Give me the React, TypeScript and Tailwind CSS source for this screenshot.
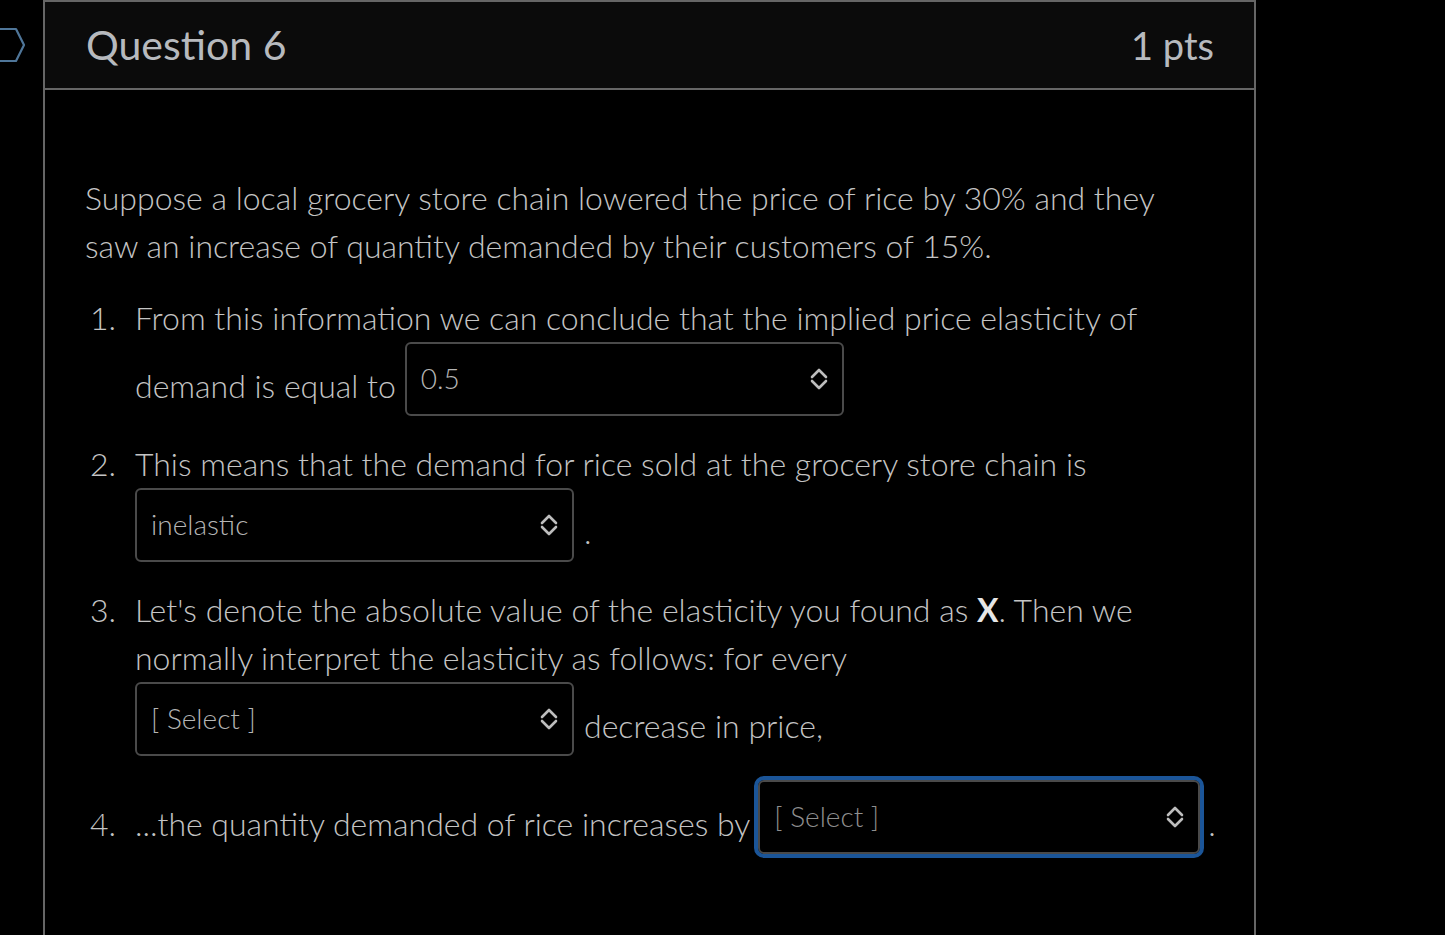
import React from "react";

function Chevrons() {
  return (
    <svg width="20" height="24" viewBox="0 0 20 24" fill="none" stroke="#bdbdbd" strokeWidth="2.6" strokeLinecap="round" strokeLinejoin="round">
      <path d="M3 10 L10 3 L17 10" />
      <path d="M3 14 L10 21 L17 14" />
    </svg>
  );
}

function Select({ value, width, focused, muted }: { value: string; width: string; focused?: boolean; muted?: boolean }) {
  return (
    <div
      className={
        "flex h-[74px] shrink-0 items-center justify-between rounded-[6px] border-2 border-[#4a4a4a] bg-black pl-[14px] pr-[13px] " +
        width +
        (focused ? " outline-[4px] outline-solid outline-[#1b5598]" : "")
      }
    >
      <span className={"text-[28px] font-light leading-none " + (muted ? "text-[#8f8f8f]" : "text-[#b5b5b5]")} style={{ marginTop: -2 }}>
        {value}
      </span>
      <Chevrons />
    </div>
  );
}

export default function App() {
  return (
    <div
      className="flex min-h-[935px] w-[1445px] overflow-hidden bg-black text-[#c4c4c4]"
      style={{ fontFamily: "Lato, 'Noto Sans', sans-serif" }}
    >
      <div className="w-[43px] shrink-0 pt-[27px]">
        <svg width="26" height="36" viewBox="0 0 26 36" fill="none" stroke="#4f7699" strokeWidth="2.2" strokeLinejoin="round">
          <path d="M-4 2 L16 2 L24 18 L16 34 L-4 34" />
        </svg>
      </div>
      <div className="w-[1213px] shrink-0 border-x-2 border-t-2 border-[#666666]">
        <div className="flex h-[88px] items-center justify-between border-b-2 border-[#666666] bg-[#0b0b0b] pl-[41px] pr-[40px]">
          <span className="text-[41px] font-normal text-[#b7babe]">Question 6</span>
          <span className="text-[38px] font-normal text-[#b7babe]">1 pts</span>
        </div>
        <div className="pl-[40px] pr-[40px] pt-[84px] text-[32px] font-light leading-[48px]">
          <p>
            Suppose a local grocery store chain lowered the price of rice by 30% and they
            <br />
            saw an increase of quantity demanded by their customers of 15%.
          </p>
          <ol className="mt-[24px]">
            <li className="flex">
              <span className="w-[50px] shrink-0 pl-[5px]">1.</span>
              <div>
                <div>From this information we can conclude that the implied price elasticity of</div>
                <div className="flex items-start gap-[9px]">
                  <span className="mt-[20px]">demand is equal to</span>
                  <Select value="0.5" width="w-[439px]" />
                </div>
              </div>
            </li>
            <li className="mt-[24px] flex">
              <span className="w-[50px] shrink-0 pl-[5px]">2.</span>
              <div>
                <div>This means that the demand for rice sold at the grocery store chain is</div>
                <div className="flex items-start gap-[10px]">
                  <Select value="inelastic" width="w-[439px]" />
                  <span className="mt-[20px]">.</span>
                </div>
              </div>
            </li>
            <li className="mt-[24px] flex">
              <span className="w-[50px] shrink-0 pl-[5px]">3.</span>
              <div>
                <div>
                  Let's denote the absolute value of the elasticity you found as <b className="font-bold text-[#e6e6e6]">X</b>. Then we
                </div>
                <div>normally interpret the elasticity as follows: for every</div>
                <div className="flex items-start gap-[10px]">
                  <Select value="[ Select ]" width="w-[439px]" />
                  <span className="mt-[20px]">decrease in price,</span>
                </div>
              </div>
            </li>
            <li className="mt-[24px] flex items-start">
              <span className="mt-[20px] w-[50px] shrink-0 pl-[5px]">4.</span>
              <div className="flex shrink-0 items-start whitespace-nowrap">
                <span className="mt-[20px] mr-[8px] shrink-0">...the quantity demanded of rice increases by</span>
                <Select value="[ Select ]" width="w-[442px]" focused muted />
                <span className="ml-[8px] mt-[20px]">.</span>
              </div>
            </li>
          </ol>
        </div>
      </div>
    </div>
  );
}
